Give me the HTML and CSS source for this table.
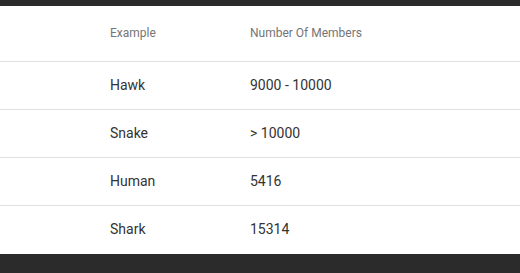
FILE: index.html
```html
<!DOCTYPE html>
<html>
<head>
<meta charset="utf-8">
<link rel="stylesheet" href="styles.css">
</head>
<body>
<div class="page">
  <table class="data-table">
    <thead>
      <tr class="head-row">
        <th class="spacer"></th>
        <th class="col-name">Example</th>
        <th class="col-num">Number Of Members</th>
      </tr>
    </thead>
    <tbody>
      <tr class="row"><td class="spacer"></td><td>Hawk</td><td>9000 - 10000</td></tr>
      <tr class="row"><td class="spacer"></td><td>Snake</td><td>&gt; 10000</td></tr>
      <tr class="row"><td class="spacer"></td><td>Human</td><td>5416</td></tr>
      <tr class="row last"><td class="spacer"></td><td>Shark</td><td>15314</td></tr>
    </tbody>
  </table>
</div>
</body>
</html>
```
FILE: styles.css
```css
html, body {
  margin: 0;
  padding: 0;
  background: #2b2b2b;
}
.page {
  padding-top: 6px;
}
.data-table {
  width: 100%;
  border-collapse: collapse;
  background: #fff;
  font-family: Roboto, "Liberation Sans", sans-serif;
}
.data-table th,
.data-table td {
  padding: 0 0 2px 0;
  text-align: left;
  vertical-align: middle;
}
.spacer {
  width: 110px;
}
.col-name {
  width: 140px;
}
.head-row th {
  height: 53px;
  font-size: 12px;
  font-weight: 400;
  color: #757575;
  border-bottom: 1px solid #e0e0e0;
}
.row td {
  height: 45px;
  font-size: 14px;
  color: #333;
  border-bottom: 1px solid #e0e0e0;
}
.row.last td {
  height: 46px;
  border-bottom: none;
}
```
